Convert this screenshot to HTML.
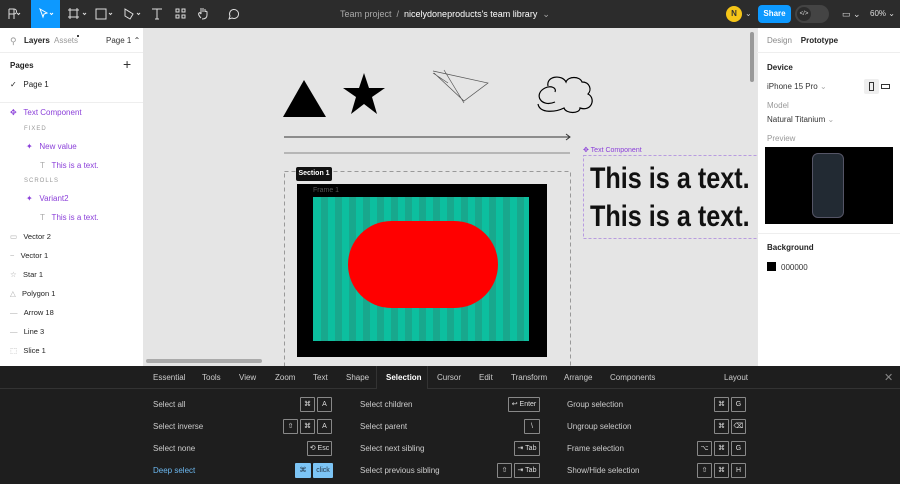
<!DOCTYPE html>
<html><head><style>
*{box-sizing:border-box;margin:0;padding:0}
body{width:900px;height:484px;overflow:hidden;font-family:"Liberation Sans",sans-serif;font-size:8px;background:#e5e5e5;position:relative}
.a{position:absolute;white-space:nowrap}
.top{left:0;top:0;width:900px;height:28px;background:#2c2c2c}
.lp{left:0;top:28px;width:143px;height:338px;background:#fff}
.rp{left:757px;top:28px;width:143px;height:338px;background:#fff;border-left:1px solid #e6e6e6}
.bp{left:0;top:366px;width:900px;height:118px;background:#1e1e1e}
.k{position:absolute;height:15px;border:1px solid #888;color:#ddd;font-size:7px;line-height:13px;text-align:center;border-radius:1px}
.kb{background:#7cc4f5;border-color:#7cc4f5;color:#234}
.bt{color:#ccc;font-size:8px}
.ly{font-size:7.5px;color:#222}
.pu{color:#8b3fd9}
</style></head><body>
<div class="a top"></div>
<div class="a" style="left:31px;top:0;width:29px;height:28px;background:#0d99ff"></div>
<svg class="a" style="left:0;top:0" width="240" height="28" fill="none" stroke="#ddd" stroke-width="1">
<path d="M9 9h5v10M9 9v10M9 14h5M14 9a2.5 2.5 0 010 5"/><path d="M17 13l1.5 1.5L20 13"/>
<path d="M40 9l7 4-3 1-1 3z" stroke="#fff"/><path d="M50 13l1.5 1.5L53 13" stroke="#fff"/>
<path d="M68 10h11M68 17h11M70 8v11M77 8v11"/><path d="M83 13l1.5 1.5L86 13"/>
<rect x="96" y="9" width="10" height="10"/><path d="M109 13l1.5 1.5L112 13"/>
<path d="M125 9l8 5-3 5-5-3z"/><path d="M137 13l1.5 1.5L140 13"/>
<path d="M152 9h10M157 9v10M155 19h4"/>
<rect x="176" y="9" width="3" height="3"/><rect x="182" y="9" width="3" height="3"/><rect x="176" y="15" width="3" height="3"/><rect x="182" y="15" width="3" height="3"/>
<path d="M201 18c-2-2-3-4-2-5s2 1 2 1V9m0 3V8m2 4V8m2 4V9m0 3c0-1 2-1 2 0v3c0 3-2 4-5 4"/>
<path d="M229 19l1-3a4.5 4.5 0 112 2z"/>
</svg>
<div class="a" style="left:340px;top:9px;font-size:9px;color:#aaa">Team project&nbsp;&nbsp;/&nbsp;&nbsp;<span style="color:#fff">nicelydoneproducts's team library</span>&nbsp;&nbsp;⌄</div>
<div class="a" style="left:726px;top:6px;width:16px;height:16px;border-radius:50%;background:#f5c518;font-size:8px;text-align:center;line-height:16px;color:#333;font-weight:bold">N</div>
<div class="a" style="left:745px;top:9px;color:#ccc">⌄</div>
<div class="a" style="left:758px;top:5px;width:33px;height:18px;background:#0d99ff;border-radius:4px;color:#fff;font-size:8px;font-weight:bold;text-align:center;line-height:18px">Share</div>
<div class="a" style="left:795px;top:5px;width:34px;height:18px;background:#444;border-radius:9px"></div>
<div class="a" style="left:797px;top:7px;width:14px;height:14px;background:#2c2c2c;border-radius:50%;color:#ddd;font-size:6px;text-align:center;line-height:14px">&lt;/&gt;</div>
<div class="a" style="left:842px;top:9px;color:#ddd;font-size:9px">▭ ⌄</div>
<div class="a" style="left:870px;top:9px;color:#ddd;font-size:8px">60% ⌄</div>

<div class="a lp"></div>
<div class="a" style="left:10px;top:36px;color:#999;font-size:9px">⚲</div>
<div class="a" style="left:24px;top:36px;font-weight:bold;color:#222">Layers</div>
<div class="a" style="left:54px;top:36px;color:#999">Assets</div>
<div class="a" style="left:77px;top:35px;width:2px;height:2px;background:#000;border-radius:50%"></div>
<div class="a" style="left:106px;top:36px;color:#333">Page 1 ⌃</div>
<div class="a" style="left:0;top:52px;width:143px;height:1px;background:#eee"></div>
<div class="a" style="left:10px;top:61px;font-weight:bold;color:#222">Pages</div>
<div class="a" style="left:123px;top:56px;font-size:14px;color:#333">+</div>
<div class="a" style="left:10px;top:80px;color:#222">✓&nbsp;&nbsp;&nbsp;Page 1</div>
<div class="a" style="left:0;top:102px;width:143px;height:1px;background:#eee"></div>
<div class="a pu" style="left:10px;top:108px">✥&nbsp;&nbsp;&nbsp;Text Component</div>
<div class="a" style="left:24px;top:126px;font-size:6px;letter-spacing:1px;color:#999">FIXED</div>
<div class="a pu" style="left:26px;top:142px">✦&nbsp;&nbsp;&nbsp;New value</div>
<div class="a pu" style="left:40px;top:161px"><span style="color:#aaa">T</span>&nbsp;&nbsp;&nbsp;This is a text.</div>
<div class="a" style="left:24px;top:178px;font-size:6px;letter-spacing:1px;color:#999">SCROLLS</div>
<div class="a pu" style="left:26px;top:194px">✦&nbsp;&nbsp;&nbsp;Variant2</div>
<div class="a pu" style="left:40px;top:213px"><span style="color:#aaa">T</span>&nbsp;&nbsp;&nbsp;This is a text.</div>
<div class="a ly" style="left:10px;top:232px"><span style="color:#aaa">▭</span>&nbsp;&nbsp;&nbsp;Vector 2</div>
<div class="a ly" style="left:10px;top:251px"><span style="color:#aaa">~</span>&nbsp;&nbsp;&nbsp;Vector 1</div>
<div class="a ly" style="left:10px;top:270px"><span style="color:#aaa">☆</span>&nbsp;&nbsp;&nbsp;Star 1</div>
<div class="a ly" style="left:10px;top:289px"><span style="color:#aaa">△</span>&nbsp;&nbsp;&nbsp;Polygon 1</div>
<div class="a ly" style="left:10px;top:308px"><span style="color:#aaa">—</span>&nbsp;&nbsp;&nbsp;Arrow 18</div>
<div class="a ly" style="left:10px;top:327px"><span style="color:#aaa">—</span>&nbsp;&nbsp;&nbsp;Line 3</div>
<div class="a ly" style="left:10px;top:346px"><span style="color:#aaa">⬚</span>&nbsp;&nbsp;&nbsp;Slice 1</div>

<svg class="a" style="left:143px;top:28px" width="614" height="338">
<polygon points="140,89 161,52 183,89" fill="#000"/>
<polygon points="221,45 226,60 242,60 229,69 234,86 221,76 208,86 213,69 200,60 216,60" fill="#000"/>
<path d="M290 43l55 12-24 18-30-28m10-3l20 33M290 45l15 10" stroke="#555" stroke-width=".7" fill="none"/>
<path d="M412 74c-14 6-22-8-10-14 6-3 12 0 10 4M405 58c-2-10 14-12 18-4 2-6 14-6 16 0 8 0 10 8 6 12 8 4 4 18-8 14 0 6-14 6-16 0-8 4-24 6-26-4" stroke="#000" stroke-width="1.2" fill="none"/>
<line x1="141" y1="109" x2="427" y2="109" stroke="#333" stroke-width="1"/><path d="M423 106l4 3-4 3" stroke="#333" fill="none"/>
<line x1="141" y1="125" x2="427" y2="125" stroke="#888" stroke-width="1"/>
<rect x="141.5" y="143.5" width="286" height="200" fill="none" stroke="#999" stroke-dasharray="4 3"/>
<rect x="440.5" y="127.5" width="180" height="83" fill="none" stroke="#b89be0" stroke-dasharray="3 2"/>
<rect x="154" y="156" width="250" height="173" fill="#000"/>
<rect x="170" y="169" width="216" height="144" fill="#0cbf9f"/>
<g fill="#18a88d">
<rect x="178" y="169" width="7" height="144"/><rect x="192" y="169" width="7" height="144"/><rect x="206" y="169" width="7" height="144"/><rect x="220" y="169" width="7" height="144"/><rect x="234" y="169" width="7" height="144"/><rect x="248" y="169" width="7" height="144"/><rect x="262" y="169" width="7" height="144"/><rect x="276" y="169" width="7" height="144"/><rect x="290" y="169" width="7" height="144"/><rect x="304" y="169" width="7" height="144"/><rect x="318" y="169" width="7" height="144"/><rect x="332" y="169" width="7" height="144"/><rect x="346" y="169" width="7" height="144"/><rect x="360" y="169" width="7" height="144"/><rect x="374" y="169" width="7" height="144"/></g>
<rect x="205" y="193" width="150" height="87" rx="43.5" fill="#ff0000"/>
<rect x="607" y="4" width="4" height="50" fill="#999" rx="2"/>
<rect x="3" y="331" width="116" height="4" fill="#aaa" rx="2"/>
</svg>
<div class="a" style="left:296px;top:167px;width:36px;height:14px;background:#111;border-radius:2px;color:#fff;font-size:7px;font-weight:bold;text-align:center;line-height:14px">Section 1</div>
<div class="a" style="left:313px;top:187px;color:#555;font-size:7px">Frame 1</div>
<div class="a" style="left:583px;top:146px;color:#8b3fd9;font-size:7px">✥ Text Component</div>
<div class="a" style="left:590px;top:160px;font-size:30px;font-weight:bold;color:#111;line-height:38px;transform:scaleX(0.84);transform-origin:0 0">This is a text.<br>This is a text.</div>

<div class="a rp"></div>
<div class="a" style="left:767px;top:36px;color:#888">Design&nbsp;&nbsp;&nbsp;&nbsp;<span style="color:#222;font-weight:bold">Prototype</span></div>
<div class="a" style="left:757px;top:52px;width:143px;height:1px;background:#eee"></div>
<div class="a" style="left:767px;top:63px;font-weight:bold;color:#222">Device</div>
<div class="a" style="left:767px;top:82px;color:#333">iPhone 15 Pro <span style="color:#aaa">⌄</span></div>
<div class="a" style="left:864px;top:79px;width:15px;height:15px;background:#eee;border-radius:2px"></div>
<div class="a" style="left:869px;top:82px;width:5px;height:9px;border:1px solid #333"></div>
<div class="a" style="left:881px;top:84px;width:9px;height:5px;border:1px solid #333"></div>
<div class="a" style="left:767px;top:101px;color:#999">Model</div>
<div class="a" style="left:767px;top:115px;color:#333">Natural Titanium <span style="color:#aaa">⌄</span></div>
<div class="a" style="left:767px;top:134px;color:#999">Preview</div>
<div class="a" style="left:765px;top:147px;width:128px;height:77px;background:#000"></div>
<div class="a" style="left:812px;top:153px;width:32px;height:65px;background:#222a33;border:1px solid #556;border-radius:6px"></div>
<div class="a" style="left:757px;top:233px;width:143px;height:1px;background:#eee"></div>
<div class="a" style="left:767px;top:243px;font-weight:bold;color:#222">Background</div>
<div class="a" style="left:767px;top:262px;width:9px;height:9px;background:#000"></div>
<div class="a" style="left:781px;top:263px;color:#333">000000</div>

<div class="a bp"></div>
<div class="a" style="left:0;top:388px;width:900px;height:1px;background:#333"></div>
<div class="a" style="left:376px;top:366px;width:52px;height:23px;background:#1e1e1e;border-left:1px solid #333;border-right:1px solid #333"></div>
<div class="a bt" style="left:153px;top:373px">Essential</div>
<div class="a bt" style="left:202px;top:373px">Tools</div>
<div class="a bt" style="left:239px;top:373px">View</div>
<div class="a bt" style="left:275px;top:373px">Zoom</div>
<div class="a bt" style="left:313px;top:373px">Text</div>
<div class="a bt" style="left:346px;top:373px">Shape</div>
<div class="a bt" style="left:386px;top:373px;color:#fff;font-weight:bold">Selection</div>
<div class="a bt" style="left:437px;top:373px">Cursor</div>
<div class="a bt" style="left:479px;top:373px">Edit</div>
<div class="a bt" style="left:511px;top:373px">Transform</div>
<div class="a bt" style="left:564px;top:373px">Arrange</div>
<div class="a bt" style="left:610px;top:373px">Components</div>
<div class="a bt" style="left:724px;top:373px">Layout</div>
<div class="a" style="left:884px;top:371px;color:#888;font-size:11px">✕</div>

<div class="a bt" style="left:153px;top:400px">Select all</div>
<div class="a bt" style="left:153px;top:422px">Select inverse</div>
<div class="a bt" style="left:153px;top:444px">Select none</div>
<div class="a bt" style="left:153px;top:466px;color:#6cb8f0">Deep select</div>
<div class="k" style="left:300px;top:397px;width:15px">⌘</div><div class="k" style="left:317px;top:397px;width:15px">A</div>
<div class="k" style="left:283px;top:419px;width:15px">⇧</div><div class="k" style="left:300px;top:419px;width:15px">⌘</div><div class="k" style="left:317px;top:419px;width:15px">A</div>
<div class="k" style="left:307px;top:441px;width:25px">⟲ Esc</div>
<div class="k kb" style="left:295px;top:463px;width:16px">⌘</div><div class="k kb" style="left:313px;top:463px;width:20px">click</div>

<div class="a bt" style="left:360px;top:400px">Select children</div>
<div class="a bt" style="left:360px;top:422px">Select parent</div>
<div class="a bt" style="left:360px;top:444px">Select next sibling</div>
<div class="a bt" style="left:360px;top:466px">Select previous sibling</div>
<div class="k" style="left:508px;top:397px;width:32px">↩ Enter</div>
<div class="k" style="left:524px;top:419px;width:16px">\</div>
<div class="k" style="left:514px;top:441px;width:26px">⇥ Tab</div>
<div class="k" style="left:497px;top:463px;width:15px">⇧</div><div class="k" style="left:514px;top:463px;width:26px">⇥ Tab</div>

<div class="a bt" style="left:567px;top:400px">Group selection</div>
<div class="a bt" style="left:567px;top:422px">Ungroup selection</div>
<div class="a bt" style="left:567px;top:444px">Frame selection</div>
<div class="a bt" style="left:567px;top:466px">Show/Hide selection</div>
<div class="k" style="left:714px;top:397px;width:15px">⌘</div><div class="k" style="left:731px;top:397px;width:15px">G</div>
<div class="k" style="left:714px;top:419px;width:15px">⌘</div><div class="k" style="left:731px;top:419px;width:15px">⌫</div>
<div class="k" style="left:697px;top:441px;width:15px">⌥</div><div class="k" style="left:714px;top:441px;width:15px">⌘</div><div class="k" style="left:731px;top:441px;width:15px">G</div>
<div class="k" style="left:697px;top:463px;width:15px">⇧</div><div class="k" style="left:714px;top:463px;width:15px">⌘</div><div class="k" style="left:731px;top:463px;width:15px">H</div>
</body></html>
